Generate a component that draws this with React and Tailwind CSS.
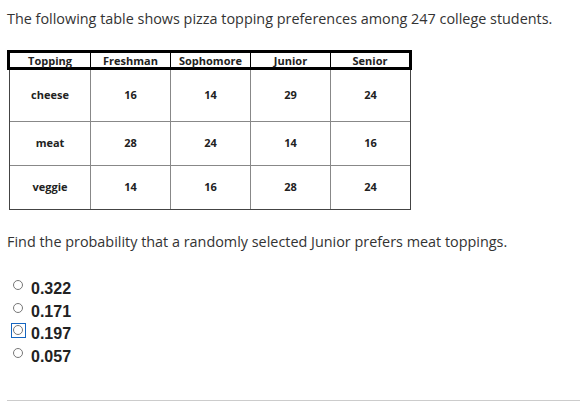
const HEADERS = ["Topping", "Freshman", "Sophomore", "Junior", "Senior"];

const ROWS = [
  { name: "cheese", values: [16, 14, 29, 24], height: "h-[52px]" },
  { name: "meat", values: [28, 24, 14, 16], height: "h-[44px]" },
  { name: "veggie", values: [14, 16, 28, 24], height: "h-[44px]" },
];

const OPTIONS = [
  { label: "0.322" },
  { label: "0.171" },
  { label: "0.197", focused: true },
  { label: "0.057" },
];

export default function App() {
  return (
    <main
      className="w-[580px] h-[402px] bg-white text-[#333] overflow-hidden flex flex-col"
      style={{ fontFamily: '"Open Sans", sans-serif' }}
    >
      {/* ===== QUESTION ===== */}
      <p className="pl-[7px] pt-[9px] text-[14.4px] leading-[20px]">
        The following table shows pizza topping preferences among 247 college students.
      </p>

      {/* ===== TABLE ===== */}
      <div className="mt-[21px] ml-[7px] flex flex-col text-[11px] font-bold text-[#222]">
        <div className="w-[405px] h-[20px] border-[3px] border-black grid grid-cols-[80px_80px_80px_80px_79px]">
          {HEADERS.map((h, i) => (
            <div
              key={h}
              className={`flex items-center justify-center leading-none ${i > 0 ? "border-l border-black" : ""}`}
            >
              {h}
            </div>
          ))}
        </div>

        <div className="ml-[2px] w-[402px] border-x border-[#444] flex flex-col">
          {ROWS.map((row, r) => (
            <div
              key={row.name}
              className={`${row.height} grid grid-cols-[80px_80px_80px_80px_80px] border-b ${r === ROWS.length - 1 ? "border-[#444]" : "border-[#888]"}`}
            >
              <div className="flex items-center justify-center">{row.name}</div>
              {row.values.map((v, i) => (
                <div key={i} className="flex items-center justify-center border-l border-[#888]">
                  {v}
                </div>
              ))}
            </div>
          ))}
        </div>
      </div>

      <p className="pl-[7px] mt-[22px] text-[14.4px] leading-[20px]">
        Find the probability that a randomly selected Junior prefers meat toppings.
      </p>

      {/* ===== ANSWERS ===== */}
      <div
        className="mt-[25px] flex flex-col text-[16px] font-bold text-[#222]"
        style={{ fontFamily: '"Liberation Sans", Arial, sans-serif' }}
      >
        {OPTIONS.map((o) => (
          <div key={o.label} className="h-[22.5px] flex items-start leading-[23px]">
            <div className="relative ml-[13px] mt-[3px] w-[10px] h-[10px]">
              <span className="block w-[10px] h-[10px] rounded-full border border-[#777] bg-white" />
              {o.focused && (
                <span className="absolute -left-[2px] -top-[2px] w-[15px] h-[15px] border border-[#1565c0]" />
              )}
            </div>
            <span className="ml-[8px]">{o.label}</span>
          </div>
        ))}
      </div>

      <div className="mt-auto mb-[1px] ml-[7px] h-px bg-[#ccc]" />
    </main>
  );
}
